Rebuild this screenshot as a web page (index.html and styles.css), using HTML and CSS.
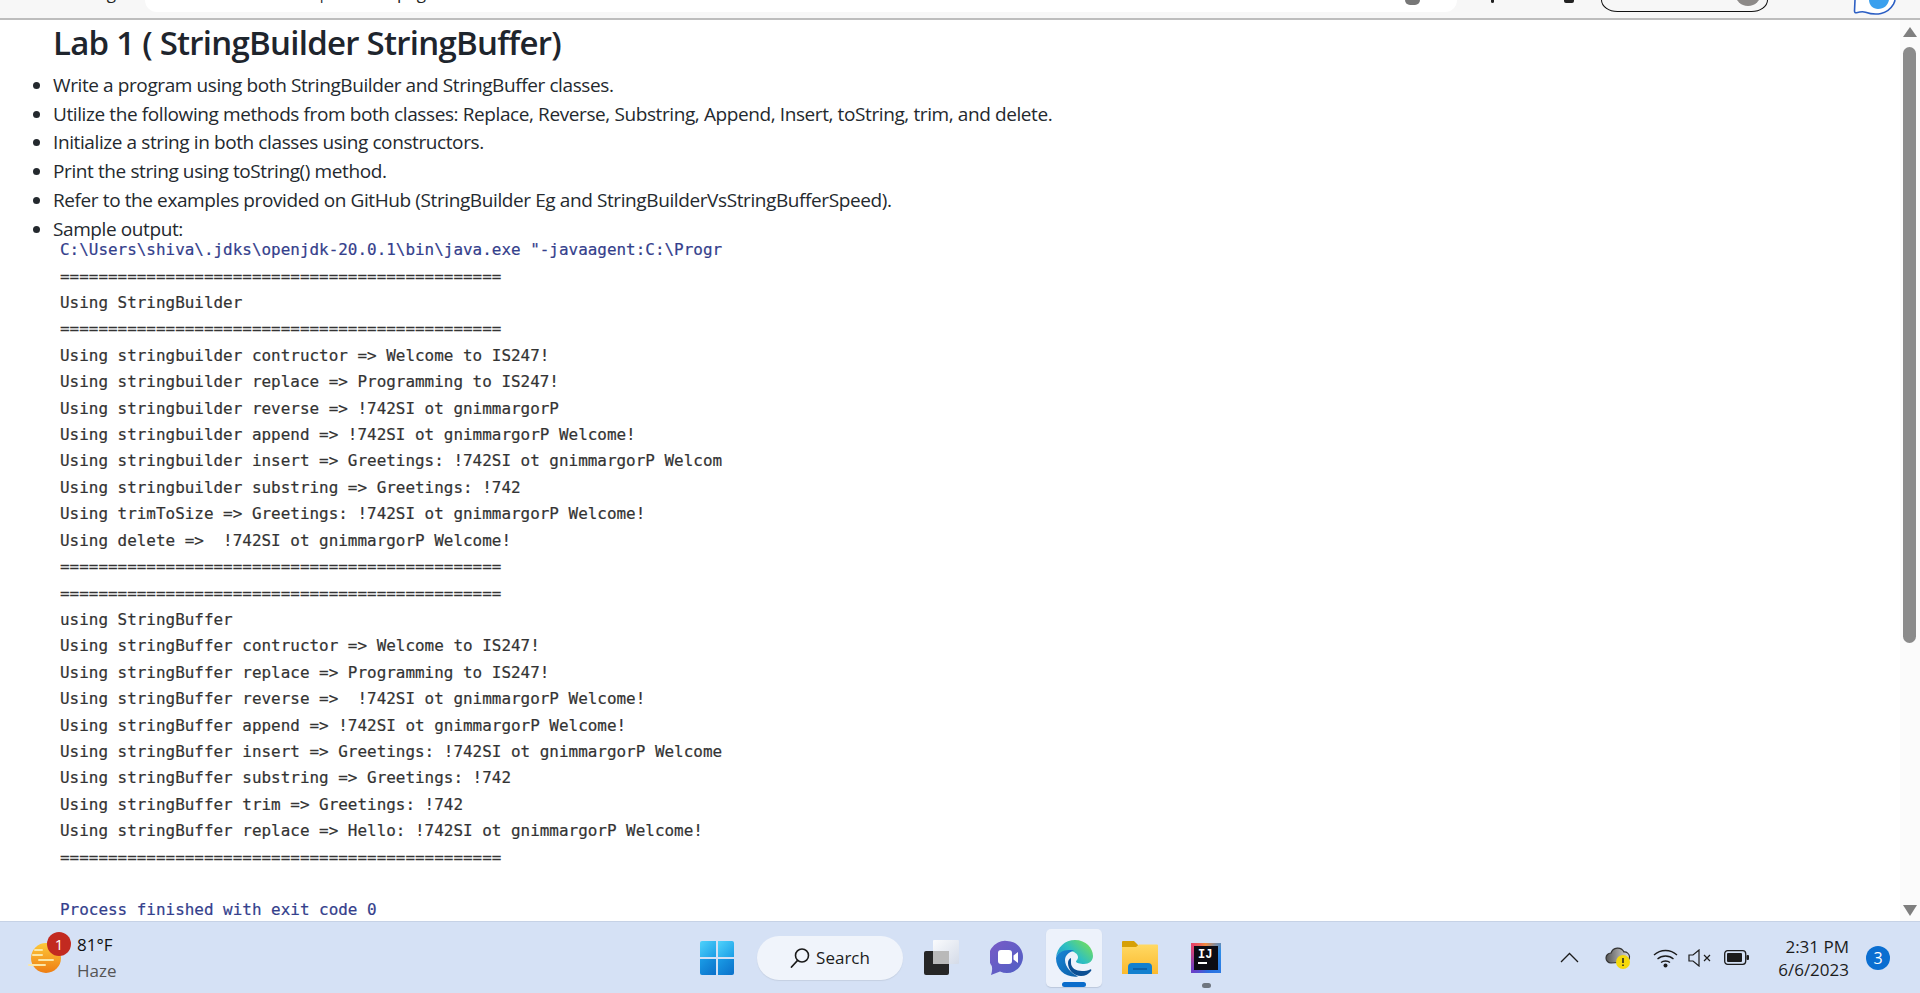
FILE: index.html
```html
<!DOCTYPE html>
<html lang="en">
<head>
<meta charset="utf-8">
<title>Lab 1 ( StringBuilder StringBuffer)</title>
<link rel="stylesheet" href="styles.css">
</head>
<body>
<div class="screen">
  <header class="browserbar">
    <span class="tabtext">ing</span>
    <div class="address">
      <span class="addr-text">| &nbsp; &nbsp; &nbsp; &nbsp; &nbsp; &nbsp; &nbsp; &nbsp;page</span>
      <span class="addr-icon"></span>
    </div>
    <span class="tool tool-a"></span>
    <span class="tool tool-b"></span>
    <div class="profile"><span class="avatar"></span></div>
    <svg class="copilot" width="44" height="15" viewBox="0 0 44 15">
      <path d="M2 0 1.500 11c0 1.500 1 2 2 1.700 3-.8 6-1.500 9-.5 10 3.500 22 2.500 28-8 .8-1.500 1.300-3 1.500-4.200" fill="#fff" stroke="#2c5fc4" stroke-width="1.600"/>
      <path d="M16 0c0 5 4 9 9 9 6 0 10-4 11-9z" fill="#3aa0ee"/>
    </svg>
  </header>

  <div class="viewport">
    <main class="doc">
      <h1 class="title">Lab 1 ( StringBuilder StringBuffer)</h1>
      <ul class="tasks">
        <li>Write a program using both StringBuilder and StringBuffer classes.</li>
        <li>Utilize the following methods from both classes: Replace, Reverse, Substring, Append, Insert, toString, trim, and delete.</li>
        <li>Initialize a string in both classes using constructors.</li>
        <li>Print the string using toString() method.</li>
        <li>Refer to the examples provided on GitHub (StringBuilder Eg and StringBuilderVsStringBufferSpeed).</li>
        <li>Sample output:
          <pre class="console"><span class="sys">C:\Users\shiva\.jdks\openjdk-20.0.1\bin\java.exe "-javaagent:C:\Progr</span>
==============================================
Using StringBuilder
==============================================
Using stringbuilder contructor =&gt; Welcome to IS247!
Using stringbuilder replace =&gt; Programming to IS247!
Using stringbuilder reverse =&gt; !742SI ot gnimmargorP
Using stringbuilder append =&gt; !742SI ot gnimmargorP Welcome!
Using stringbuilder insert =&gt; Greetings: !742SI ot gnimmargorP Welcom
Using stringbuilder substring =&gt; Greetings: !742
Using trimToSize =&gt; Greetings: !742SI ot gnimmargorP Welcome!
Using delete =&gt;  !742SI ot gnimmargorP Welcome!
==============================================
==============================================
using StringBuffer
Using stringBuffer contructor =&gt; Welcome to IS247!
Using stringBuffer replace =&gt; Programming to IS247!
Using stringBuffer reverse =&gt;  !742SI ot gnimmargorP Welcome!
Using stringBuffer append =&gt; !742SI ot gnimmargorP Welcome!
Using stringBuffer insert =&gt; Greetings: !742SI ot gnimmargorP Welcome
Using stringBuffer substring =&gt; Greetings: !742
Using stringBuffer trim =&gt; Greetings: !742
Using stringBuffer replace =&gt; Hello: !742SI ot gnimmargorP Welcome!
==============================================

<span class="sys">Process finished with exit code 0</span></pre>
        </li>
      </ul>
    </main>
    <aside class="scrollbar">
      <span class="arrow-up"></span>
      <span class="thumb"></span>
      <span class="arrow-down"></span>
    </aside>
  </div>

  <footer class="taskbar">
    <div class="widget">
      <span class="weather-icon">
        <svg width="36" height="36" viewBox="0 0 36 36">
          <defs><linearGradient id="sun" x1="0" y1="0" x2="0" y2="1"><stop offset="0" stop-color="#fdc93a"/><stop offset="1" stop-color="#ee7d12"/></linearGradient></defs>
          <circle cx="19" cy="18" r="15" fill="url(#sun)"/>
          <path d="M8 10h7M6 15h9M2 25h16M12 20h14" stroke="#fbe7a6" stroke-width="2" stroke-linecap="round"/>
        </svg>
        <span class="alert">1</span>
      </span>
      <div class="weather-text">
        <span class="temp">81°F</span>
        <span class="cond">Haze</span>
      </div>
    </div>

    <nav class="apps">
      <svg class="app-start" width="34" height="34" viewBox="0 0 34 34">
        <defs>
          <linearGradient id="win1" x1="0" y1="0" x2="1" y2="1"><stop offset="0" stop-color="#4fd2fb"/><stop offset="1" stop-color="#1b9de6"/></linearGradient>
          <linearGradient id="win2" x1="0" y1="0" x2="1" y2="1"><stop offset="0" stop-color="#1a9ce6"/><stop offset="1" stop-color="#0b70c9"/></linearGradient>
        </defs>
        <path d="M2 0h14v16H0V2a2 2 0 0 1 2-2z" fill="url(#win1)"/>
        <path d="M18 0h14a2 2 0 0 1 2 2v14H18z" fill="url(#win1)"/>
        <path d="M0 18h16v16H2a2 2 0 0 1-2-2z" fill="url(#win2)"/>
        <path d="M18 18h16v14a2 2 0 0 1-2 2H18z" fill="url(#win2)"/>
      </svg>
      <div class="search">
        <svg width="20" height="22" viewBox="0 0 20 22"><circle cx="12" cy="8.500" r="6.500" fill="none" stroke="#1a1a1a" stroke-width="1.600"/><path d="M7.500 13.500 1.500 20" stroke="#1a1a1a" stroke-width="1.800" stroke-linecap="round"/></svg>
        <span>Search</span>
      </div>
      <svg class="app-view" width="36" height="36" viewBox="0 0 36 36">
        <defs><linearGradient id="tv" x1="0" y1="0" x2="1" y2="1"><stop offset="0" stop-color="#fafbfd"/><stop offset="1" stop-color="#d4dbe8"/></linearGradient></defs>
        <rect x="0" y="11" width="25" height="24" rx="2" fill="#262626"/>
        <rect x="9" y="0" width="26" height="24" rx="1" fill="url(#tv)"/>
        <rect x="9" y="11" width="16" height="13" fill="#b9b9b9"/>
      </svg>
      <svg class="app-meet" width="34" height="36" viewBox="0 0 34 36">
        <defs><linearGradient id="meet" x1="0" y1="0" x2="1" y2="1"><stop offset="0" stop-color="#7a5bc7"/><stop offset="1" stop-color="#4e5fc4"/></linearGradient></defs>
        <path d="M17 1a16 16 0 1 1-7 30.400L1 35c1-3 1.500-6 .8-9A16 16 0 0 1 17 1z" fill="url(#meet)"/>
        <rect x="8" y="10" width="14" height="14" rx="3" fill="#fff"/>
        <path d="M23.500 15.500 28 12v11l-4.500-3.500z" fill="#fff"/>
      </svg>
      <div class="app-edge">
        <svg width="37" height="37" viewBox="0 0 37 37">
          <defs>
            <linearGradient id="eg1" x1="0" y1="1" x2="1" y2=".3"><stop offset="0" stop-color="#1c8fd6"/><stop offset=".55" stop-color="#2fc0c0"/><stop offset="1" stop-color="#6fdc62"/></linearGradient>
            <linearGradient id="eg2" x1="0" y1="0" x2="1" y2="1"><stop offset="0" stop-color="#1a86d6"/><stop offset="1" stop-color="#0c5fa8"/></linearGradient>
          </defs>
          <path d="M0 18C1 7 9 0 19 0c11 0 18 8 18 16 0 5-4 8-9 8-4 0-8-1-8-2.500 0-1 2-1.500 2-4.500 0-3-4-6-9-6C7 11 1 13 0 18z" fill="url(#eg1)"/>
          <path d="M0 18c1-5 7-8 13-8 3 0 5 .7 5 .7C12 12 9 16 9 20c0 7 6 13 13 16.500C10 38 0 30 0 18z" fill="url(#eg2)"/>
          <path d="M15 18c-2 1-3 2.500-3 5 0 7 6 13 13 13 4 0 8-2 10-5 1-1 0-2-1-1.500-2 1-5 1.500-8 1.500-6 0-11-3-11-8 0-2 0-4 0-5z" fill="#0b4f94"/>
        </svg>
        <span class="active-mark"></span>
      </div>
      <svg class="app-folder" width="36" height="33" viewBox="0 0 36 33">
        <defs><linearGradient id="fo" x1="0" y1="0" x2="0" y2="1"><stop offset="0" stop-color="#ffd963"/><stop offset="1" stop-color="#fbb92d"/></linearGradient></defs>
        <path d="M1 0h11l4 4v3H0V1a1 1 0 0 1 1-1z" fill="#d6a007"/>
        <path d="M0 6 14 6l3-2.500h18a1 1 0 0 1 1 1V33H0z" fill="url(#fo)"/>
        <path d="M6 33V26a4 4 0 0 1 4-4h16a4 4 0 0 1 4 4v7z" fill="#1380cf"/>
        <path d="M11 28h14" stroke="#0c5a9e" stroke-width="1.500"/>
      </svg>
      <div class="app-idea">
        <div class="ij"><div class="ij-inner"><span class="ij-text">IJ</span><span class="ij-line"></span></div></div>
        <span class="running-mark"></span>
      </div>
    </nav>

    <div class="tray">
      <svg class="t-chevron" width="19" height="11" viewBox="0 0 19 11"><path d="M1 10 9.500 1.500 18 10" fill="none" stroke="#1c1c1c" stroke-width="1.300"/></svg>
      <svg class="t-cloud" width="26" height="26" viewBox="0 0 26 26">
        <defs><linearGradient id="cl" x1="0" y1="0" x2="1" y2="0"><stop offset="0" stop-color="#555"/><stop offset="1" stop-color="#ddd"/></linearGradient></defs>
        <path d="M6 18a5 5 0 0 1 0-10 7 7 0 0 1 13-1 5 5 0 0 1 1 10z" fill="url(#cl)" stroke="#333" stroke-width="1.200"/>
        <circle cx="18" cy="17" r="7" fill="#f5d90a"/>
        <path d="M18 13v5M18 19.500v1.500" stroke="#222" stroke-width="1.500"/>
      </svg>
      <svg class="t-wifi" width="25" height="20" viewBox="0 0 25 20"><g fill="none" stroke="#1c1c1c" stroke-width="1.300"><path d="M1 7c6.500-6 16.500-6 23 0"/><path d="M4.500 11c4.500-4 11.500-4 16 0"/><path d="M8 14.500c2.500-2 6.500-2 9 0"/></g><circle cx="12.500" cy="17.500" r="2" fill="#1c1c1c"/></svg>
      <svg class="t-sound" width="24" height="18" viewBox="0 0 24 18"><g fill="none" stroke="#1c1c1c" stroke-width="1.200"><path d="M1 6h4l6-5v16l-6-5H1z"/><path d="M16 6l6 6M22 6l-6 6"/></g></svg>
      <svg class="t-batt" width="25" height="15" viewBox="0 0 25 15"><rect x=".7" y=".7" width="21" height="13.600" rx="3" fill="none" stroke="#1c1c1c" stroke-width="1.300"/><rect x="3" y="3" width="15" height="9" rx="1" fill="#1c1c1c"/><rect x="22.500" y="5" width="2.500" height="5" rx="1" fill="#1c1c1c"/></svg>
      <div class="clock"><span>2:31 PM</span><span>6/6/2023</span></div>
      <span class="notif">3</span>
    </div>
  </footer>
</div>
</body>
</html>
```
FILE: styles.css
```css
* { box-sizing: border-box; }
html, body { margin: 0; height: 100%; overflow: hidden; }
body { font-family: "Open Sans", "Liberation Sans", sans-serif; color: #1f2328; background: #fff; }

.screen { display: flex; flex-direction: column; width: 1920px; height: 993px; }

/* Browser chrome, cut off by the top of the picture */
.browserbar {
  flex: 0 0 20px;
  display: flex;
  align-items: flex-start;
  background: #f7f7f7;
  border-bottom: 2px solid #bdbdbd;
  overflow: hidden;
}
.tabtext { width: 145px; margin-top: -18px; padding-right: 29px; font-size: 17px; line-height: 22px; text-align: right; color: #222; }
.address {
  width: 1312px; height: 12px;
  display: flex; justify-content: space-between;
  background: #fff;
  border-radius: 0 0 22px 22px;
}
.addr-text { margin: -18px 0 0 172px; font-size: 17px; line-height: 22px; white-space: nowrap; color: #222; }
.addr-icon { width: 15px; height: 5px; margin-right: 37px; background: #777; border-radius: 0 0 8px 8px; }
.tool { height: 3px; background: #222; border-radius: 0 0 2px 2px; }
.tool-a { width: 3px; margin-left: 34px; }
.tool-b { width: 10px; margin-left: 70px; }
.profile {
  width: 167px; height: 12px; margin-left: 27px;
  display: flex; justify-content: flex-end;
  border: 1.500px solid #111; border-top: 0;
  border-radius: 0 0 22px 22px / 0 0 16px 16px;
  padding-right: 6px;
}
.avatar { flex: none; width: 26px; height: 26px; margin-top: -20px; background: #8d8a88; border-radius: 50%; }
.copilot { margin-left: 85px; }

/* Page */
.viewport { flex: 1; display: flex; min-height: 0; }
.doc { flex: 1; min-width: 0; overflow: hidden; background: #fff; }
.title {
  margin: 0 0 0 53px;
  padding-top: 2px;
  font-size: 33px; line-height: 42px; font-weight: 600;
  letter-spacing: -0.75px;
  color: #1e252d;
}
.tasks {
  margin: 7px 0 0; padding: 0 0 0 53px;
  font-size: 19px; line-height: 28.700px;
  letter-spacing: -0.4px;
  color: #24292e;
}
.console {
  margin: -6px 0 0 7px;
  font-family: "DejaVu Sans Mono", "Liberation Mono", monospace;
  font-size: 15.950px; line-height: 26.400px;
  letter-spacing: 0;
  color: #333;
  -webkit-text-stroke: 0.2px #333;
}
.sys { color: #34408c; -webkit-text-stroke: 0.2px #34408c; }

.scrollbar {
  flex: 0 0 20px;
  display: flex; flex-direction: column; align-items: center;
  padding: 7px 3px 5px 2px;
  background: #fbfbfb;
}
.arrow-up { width: 0; height: 0; border: 7px solid transparent; border-top: 0; border-bottom: 10px solid #7f7f7f; }
.thumb { width: 13px; height: 596px; margin-top: 10px; background: #8b8b8b; border-radius: 7px; }
.arrow-down { width: 0; height: 0; margin-top: auto; border: 7px solid transparent; border-bottom: 0; border-top: 11px solid #7f7f7f; }

/* Taskbar */
.taskbar {
  flex: 0 0 72px;
  display: grid;
  grid-template-columns: 1fr auto 1fr;
  align-items: center;
  background: #d5e1f5;
  border-top: 1px solid #c6d2e6;
}
.widget { display: flex; align-items: center; padding-left: 27px; }
.weather-icon { position: relative; display: block; width: 36px; height: 36px; margin-right: 14px; }
.weather-icon svg { display: block; }
.alert {
  position: absolute; top: -8px; left: 20px;
  width: 24px; height: 24px; border-radius: 50%;
  background: #c22a20; color: #fff;
  font-size: 15px; line-height: 24px; text-align: center;
}
.weather-text { display: flex; flex-direction: column; font-size: 17px; line-height: 26px; }
.temp { color: #111; }
.cond { color: #555; }

.apps { display: flex; align-items: center; height: 71px; }
.app-start { margin-left: 1px; }
.search {
  display: flex; align-items: center; justify-content: center; gap: 6px;
  width: 146px; height: 44px; margin-left: 23px;
  background: #f0f4fb;
  border-radius: 22px;
  box-shadow: 0 1px 1px #c5d0e2;
  font-size: 17px; color: #1c1c1c;
}
.app-view { margin-left: 21px; }
.app-meet { margin-left: 30px; }
.app-edge {
  position: relative;
  display: flex; justify-content: center;
  width: 56px; height: 58px; margin-left: 22px; padding-top: 11px;
  background: #edf2fb;
  border-radius: 5px;
  box-shadow: 0 1px 1px #bcc8dc;
}
.active-mark { position: absolute; bottom: 0; left: 16px; width: 24px; height: 5px; border-radius: 3px; background: #0a6ccb; }
.app-folder { margin-left: 20px; }
.app-idea { position: relative; width: 30px; height: 30px; margin-left: 33px; }
.ij {
  width: 30px; height: 30px; padding: 3px;
  background: conic-gradient(from 315deg, #e8436a, #f08a3c 12%, #2f8ee8 30%, #2a6ee0 60%, #6a3fc8 75%, #e8436a);
}
.ij-inner { display: flex; flex-direction: column; width: 24px; height: 24px; padding: 3px 4px; background: #0c0c14; }
.ij-text { font-family: "Liberation Mono", monospace; font-weight: 700; font-size: 12px; line-height: 12px; color: #fff; }
.ij-line { width: 9px; height: 2px; margin-top: 1px; background: #fff; }
.running-mark { position: absolute; top: 40px; left: 11px; width: 9px; height: 5px; border-radius: 3px; background: #6f7680; }

.tray { display: flex; align-items: center; justify-content: flex-end; padding-right: 30px; }
.t-chevron { margin-right: 26px; }
.t-cloud { margin-right: 22px; }
.t-wifi { margin-right: 10px; }
.t-sound { margin-right: 12px; }
.t-batt { margin-right: 29px; }
.clock { display: flex; flex-direction: column; align-items: flex-end; margin-right: 17px; font-size: 17px; line-height: 23px; color: #1c1c1c; }
.notif {
  width: 24px; height: 24px; border-radius: 50%;
  background: #0a6ed1; color: #fff;
  font-size: 16px; line-height: 24px; text-align: center;
}
```
